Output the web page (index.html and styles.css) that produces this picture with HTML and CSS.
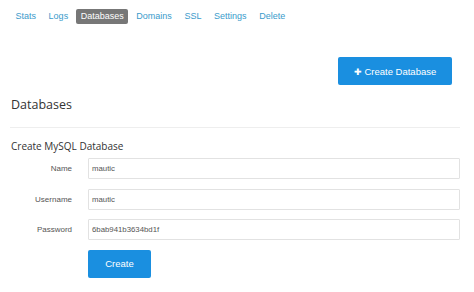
FILE: index.html
```html
<!DOCTYPE html>
<html>
<head>
<meta charset="utf-8">
<link rel="stylesheet" href="styles.css">
</head>
<body>
<nav class="tabs">
  <a class="tab">Stats</a>
  <a class="tab">Logs</a>
  <a class="tab active">Databases</a>
  <a class="tab">Domains</a>
  <a class="tab">SSL</a>
  <a class="tab">Settings</a>
  <a class="tab">Delete</a>
</nav>
<div class="toolbar">
  <button class="btn btn-create-db"><span class="plus">✚</span> Create Database</button>
</div>
<h2 class="page-title">Databases</h2>
<hr class="divider">
<h3 class="section-title">Create MySQL Database</h3>
<form class="db-form">
  <div class="row"><label>Name</label><div class="field">mautic</div></div>
  <div class="row"><label>Username</label><div class="field">mautic</div></div>
  <div class="row"><label>Password</label><div class="field">6bab941b3634bd1f</div></div>
  <div class="row"><span class="spacer"></span><button class="btn btn-create" type="button">Create</button></div>
</form>
</body>
</html>
```
FILE: styles.css
```css
html, body { margin: 0; padding: 0; background: #fff; }
body { font-family: "Liberation Sans", Arial, sans-serif; width: 474px; height: 292px; overflow: hidden; }
.tabs { display: flex; gap: 3.6px; padding: 9px 0 0 11px; height: 15px; }
.tab { font-size: 9px; color: #3a9bcb; padding: 0 4.5px; line-height: 15px; border-radius: 2px; }
.tab.active { background: #777; color: #fff; }
.toolbar { display: flex; justify-content: flex-end; padding: 33px 22px 0 0; }
.btn { border: 0; border-radius: 2px; background: #1a8fe0; color: #fff; font-family: "Liberation Sans", Arial, sans-serif; font-size: 9.5px; padding: 0; cursor: pointer; }
.btn-create-db { width: 114px; height: 28px; }
.plus { font-size: 9px; }
.page-title { margin: 0; padding: 12px 0 0 11px; font-family: "Open Sans", sans-serif; font-weight: 400; font-size: 12.5px; color: #333; line-height: 16px; }
.divider { margin: 14px 14px 0 10px; border: 0; border-top: 1px solid #eee; }
.section-title { margin: 0; padding: 11px 0 0 11px; font-family: "Open Sans", sans-serif; font-weight: 400; font-size: 10px; color: #333; line-height: 14px; }
.db-form { display: flex; flex-direction: column; gap: 9.5px; padding: 5px 14px 0 0; }
.row { display: flex; align-items: center; gap: 16px; }
.row label, .spacer { width: 72px; text-align: right; font-size: 8px; color: #555; flex: none; }
.field { flex: 1; height: 19px; border: 1px solid #e2e2e2; border-radius: 1px; font-size: 7.8px; color: #555; line-height: 19px; padding-left: 3px; }
.btn-create { width: 63px; height: 28px; font-size: 9.5px; }
```
